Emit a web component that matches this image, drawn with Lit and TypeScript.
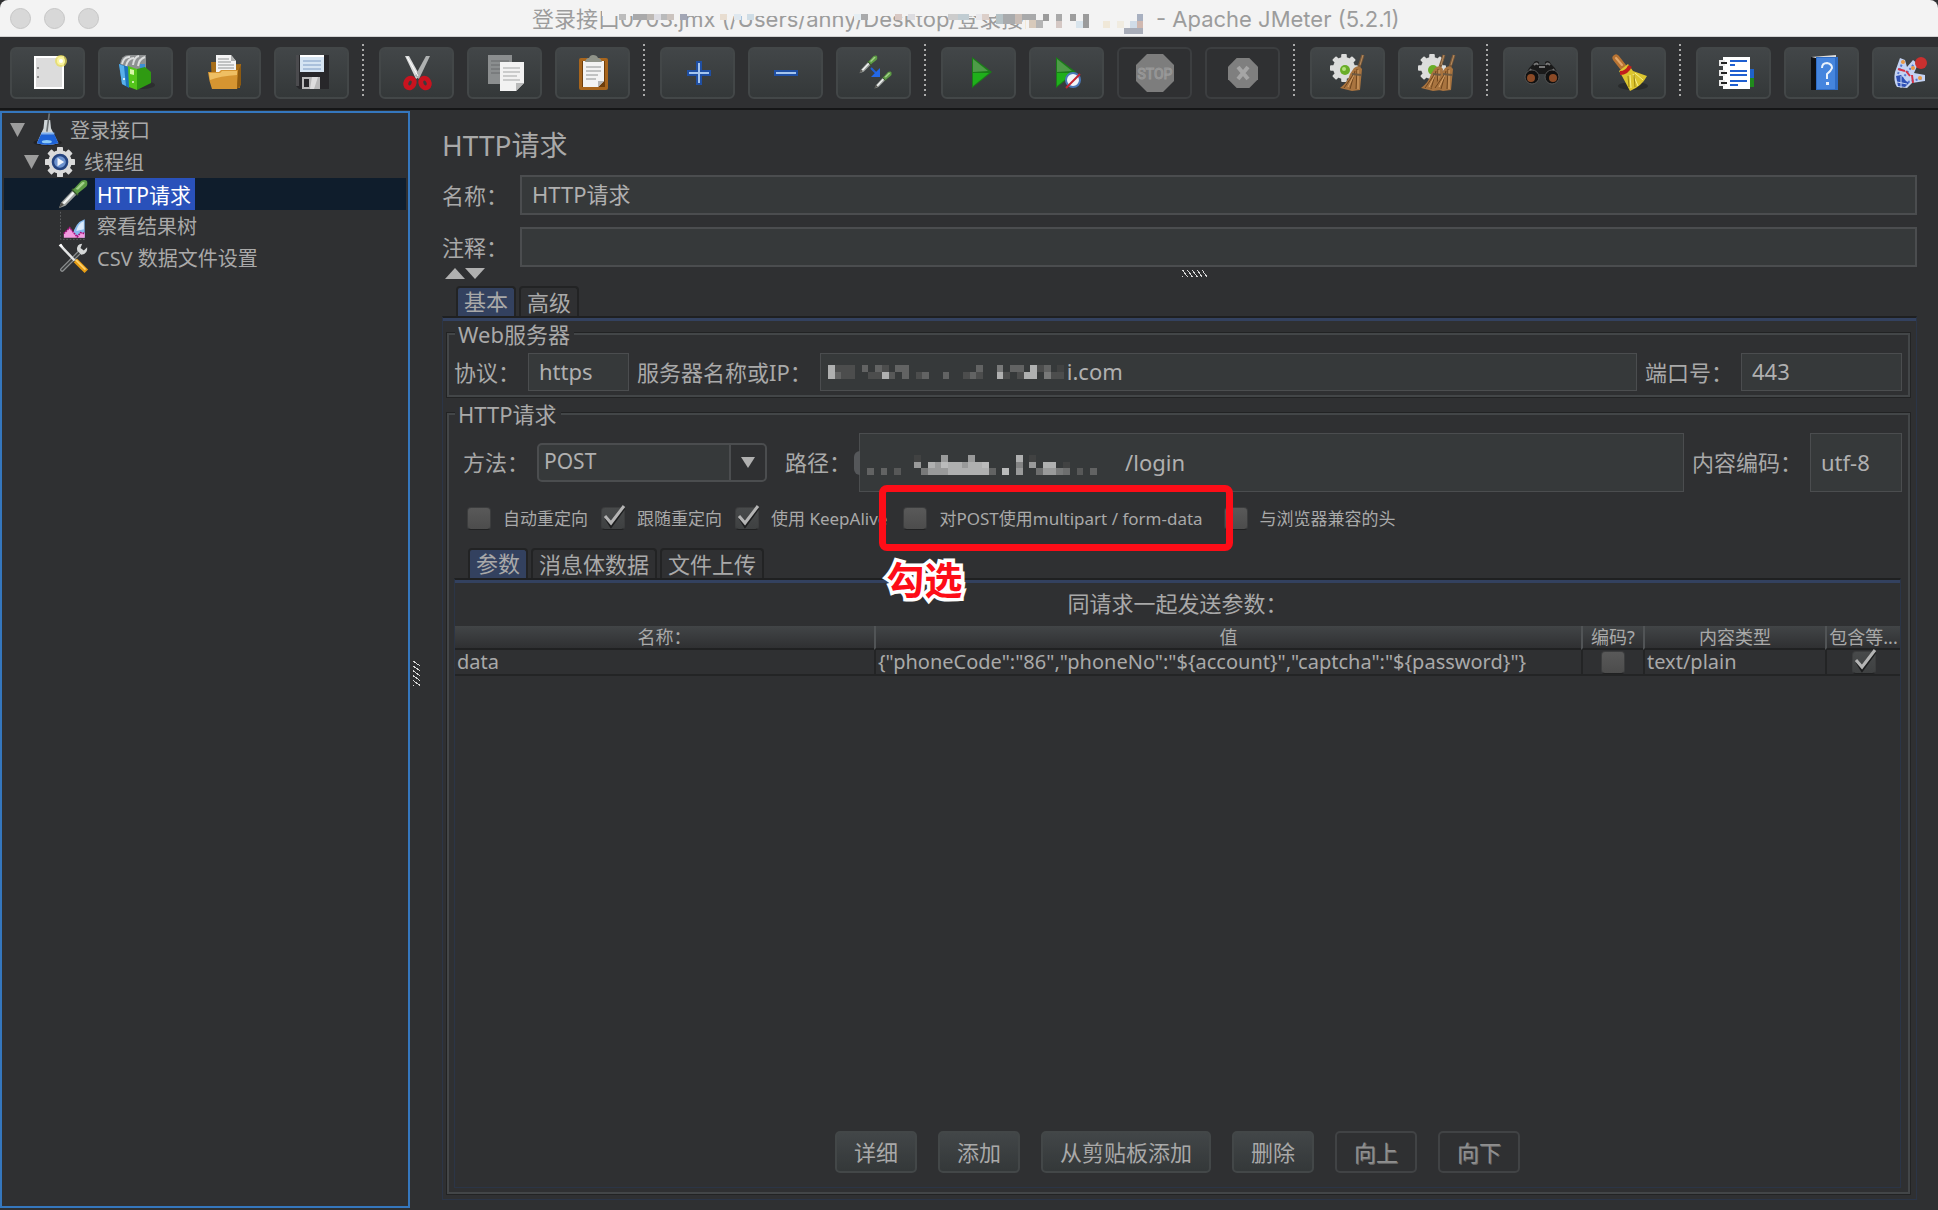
import { LitElement, html, svg, css, nothing } from "lit";
import type { TemplateResult, SVGTemplateResult } from "lit";
import { customElement, property } from "lit/decorators.js";
import { classMap } from "lit/directives/class-map.js";

/* ---------- icon drawings, 36 x 36 units ---------- */

const gear = (cx: number, cy: number, r: number, fill: string) => svg`
  <g transform="translate(${cx} ${cy})" fill=${fill}>
    <circle r=${r * 0.78}></circle>
    ${[0, 45, 90, 135].map(
      (a) => svg`<rect x=${-r * 0.2} y=${-r} width=${r * 0.4} height=${r * 2} rx="1" transform="rotate(${a})"></rect>`
    )}
  </g>`;

const pipette = svg`
  <path d="M1 35 L4 28 L17 14 L22 19 L9 32 Z" fill="#9a9f9c"></path>
  <path d="M5 29 L18 15 L20 17 L8 30 Z" fill="#f2f4f3"></path>
  <path d="M1 35 L4 28 L7 31 Z" fill="#54524d"></path>
  <path d="M17 12 L24 19" stroke="#3b5a2f" stroke-width="3"></path>
  <path d="M18 13 L28 2 Q34 0 35 3 Q36 8 33 10 L23 18 Z" fill="#5d9b45"></path>
  <path d="M21 12 L29 4 Q32 3 32 5 L24 13 Z" fill="#a4d18b"></path>`;

const broomHead = (x: number) => svg`
  <g transform="translate(${x} 0)">
    <path d="M33 0 L29 12" stroke="#7d5a38" stroke-width="3"></path>
    <path d="M33 0 L30 10" stroke="#b58d62" stroke-width="1"></path>
    <path d="M24 13 Q29 9 32 14 L30 35 L22 36 L10 33 Q18 27 20 19 Z" fill="#a9743f"></path>
    <path d="M27 14 L26 34 M25 16 L20 34 M23 20 L14 33" stroke="#6f451d" stroke-width="1"></path>
    <path d="M28 15 L28 34 M24 20 L18 32" stroke="#dba66b" stroke-width="1"></path>
    <path d="M22 19 L31 20" stroke="#6f5a42" stroke-width="2"></path>
  </g>`;

const octagon = (cx: number, cy: number, rx: number, ry: number) => {
  const k = 0.42;
  const pts = [[-k, -1], [k, -1], [1, -k], [1, k], [k, 1], [-k, 1], [-1, k], [-1, -k]];
  return pts.map(([x, y]) => `${cx + x * rx},${cy + y * ry}`).join(" ");
};

const ICONS: Record<string, SVGTemplateResult> = {
  new: svg`
    <rect x="4" y="1" width="30" height="33" fill="#fff"></rect>
    <rect x="6" y="3" width="26" height="29" fill="#dcdcdc"></rect>
    <circle cx="8" cy="13" r="1" fill="#777"></circle><circle cx="8" cy="22" r="1" fill="#777"></circle>
    <circle cx="31" cy="6" r="6" fill="#e9dd5a" opacity=".75"></circle>
    <circle cx="31" cy="6" r="4" fill="#fbf6a0"></circle><circle cx="31" cy="6" r="2" fill="#fff"></circle>`,
  templates: svg`
    <ellipse cx="24" cy="30" rx="13" ry="4" fill="#222" opacity=".5"></ellipse>
    <path d="M2 9 Q3 0 11 0 L28 0 L28 14 L8 14 Z" fill="#8d9091"></path>
    <path d="M4 9 Q6 1 12 2 M8 11 Q10 3 16 3 M15 10 Q16 2 21 1 M20 11 Q21 4 27 2" fill="none" stroke="#dcdede" stroke-width="2"></path>
    <path d="M1 9 L11 12 L11 33 L4 29 Z" fill="#1c74bd"></path>
    <path d="M1 9 L6 11 L8 31 L4 29 Z" fill="#58b0ea"></path>
    <rect x="22" y="9" width="5" height="5" fill="#3c8fd4"></rect>
    <path d="M10 11 L19 14 L19 35 L11 32 Z" fill="#54c41b"></path>
    <path d="M12 14 L16 15 L16 20 L12 19 Z" fill="#d7f7a8"></path>
    <path d="M19 14 L27 12 L33 17 L33 28 L19 35 Z" fill="#2f9a12"></path>
    <circle cx="15" cy="27" r="1" fill="#efffdc"></circle><circle cx="6" cy="24" r="1" fill="#fff"></circle>`,
  open: svg`
    <path d="M5 7 L14 7 L16 10 L35 9 L34 33 L6 33 Z" fill="#a76d17"></path>
    <path d="M10 0 L25 0 L30 6 L30 20 L10 20 Z" fill="#f4f4f4"></path>
    <path d="M25 0 L30 6 L25 6 Z" fill="#aeb0b0"></path>
    <path d="M12 4 H23 M12 7 H25 M12 10 H28 M12 13 H28" stroke="#8f9292"></path>
    <path d="M2 17 L13 17 L15 15 L32 15 L31 34 L6 34 Q3 26 2 17 Z" fill="#d69531"></path>
    <path d="M3 18 L14 18 L16 16 L31 16 L31 20 Q14 21 4 25 Z" fill="#efbf63"></path>
    <path d="M31 34 L35 30 L35 10 L32 16 Z" fill="#8e5a10"></path>`,
  save: svg`
    <path d="M2 0 H35 V34 H5 L2 31 Z" fill="#27272a"></path>
    <path d="M2 0 H5 V31 L2 31 Z" fill="#4b4b4e"></path>
    <rect x="6" y="0" width="24" height="17" fill="#d5e4f2"></rect>
    <rect x="6" y="0" width="24" height="2" fill="#fff"></rect>
    <path d="M9 6 H27 M9 10 H27 M9 14 H27" stroke="#7e9cc4" stroke-width="1"></path>
    <rect x="8" y="22" width="18" height="12" fill="#b9b9b9"></rect>
    <rect x="10" y="24" width="5" height="8" fill="#27272a"></rect>
    <path d="M18 22 H24 L20 34 H16 Z" fill="#dedede"></path>`,
  cut: svg`
    <path d="M6 1 L10 1 L21 21 L17 24 Z" fill="#d8dada"></path><path d="M31 1 L27 1 L16 21 L20 24 Z" fill="#aeb1b1"></path>
    <path d="M8 2 L19 21" stroke="#fff" stroke-width="1"></path>
    <ellipse cx="11" cy="28" rx="4" ry="5" transform="rotate(28 11 28)" fill="none" stroke="#c8131f" stroke-width="5"></ellipse>
    <ellipse cx="26" cy="28" rx="4" ry="5" transform="rotate(-28 26 28)" fill="none" stroke="#c8131f" stroke-width="5"></ellipse>`,
  copy: svg`
    <rect x="1" y="0" width="24" height="29" fill="#8b8e8f"></rect>
    <path d="M4 6 H22 M4 10 H22 M4 14 H14 M4 18 H14" stroke="#686b6c"></path>
    <path d="M13 7 H37 V28 L29 36 H13 Z" fill="#f2f2f2"></path>
    <path d="M16 13 H33 M16 17 H33 M16 21 H30 M16 25 H33" stroke="#a3a5a5"></path>
    <path d="M37 28 L29 36 L29 28 Z" fill="#b9baba"></path>`,
  paste: svg`
    <rect x="4" y="3" width="29" height="32" rx="2" fill="#a8651c"></rect>
    <rect x="7" y="6" width="23" height="26" fill="#6d3e0c"></rect>
    <path d="M8 6 H29 V26 L23 32 H8 Z" fill="#f3f3f3"></path>
    <path d="M11 12 H26 M11 16 H26 M11 20 H23 M11 24 H21" stroke="#8f9292"></path>
    <path d="M29 26 L23 32 L23 26 Z" fill="#b5b5b5"></path>
    <path d="M10 7 Q11 3 14 3 Q15 0 18 0 Q22 0 23 3 Q26 3 27 7 Z" fill="#8f9389"></path>`,
  plus: svg`
    <path d="M17 7 H21 V16 H30 V20 H21 V29 H17 V20 H8 V16 H17 Z" fill="#a5c5ee" stroke="#1f4fa3" stroke-width="2"></path>`,
  minus: svg`<rect x="7" y="16" width="22" height="4" fill="#a5c5ee" stroke="#1f4fa3" stroke-width="2"></rect>`,
  toggle: svg`
    <g transform="translate(3 0) scale(.52)">${pipette}</g><g transform="translate(18 16) scale(.5)">${pipette}</g>
    <path d="M15 13 L22 20" stroke="#2060d8" stroke-width="2"></path><path d="M24 13 V22 H15 Z" fill="#2368e8"></path>`,
  play: svg`
    <path d="M11 2 L31 17 L11 33 Z" fill="#1a7d18"></path><path d="M12 4 L27 16 L12 17 Z" fill="#4e9b48"></path>
    <path d="M12 18 L28 18 L12 31 Z" fill="#1fb01b"></path>`,
  playNow: svg`
    <path d="M7 2 L27 17 L7 33 Z" fill="#1a7d18"></path><path d="M8 4 L23 16 L8 17 Z" fill="#4e9b48"></path>
    <path d="M8 18 L24 18 L8 31 Z" fill="#1fb01b"></path>
    <circle cx="24" cy="25" r="7" fill="#f2f4f8" stroke="#4a78b8" stroke-width="2"></circle>
    <path d="M17 33 L31 19" stroke="#c22531" stroke-width="2"></path>`,
  stop: svg`
    <polygon points=${octagon(18, 18, 19, 19)} fill="#7d7d7d"></polygon>
    <text x="18" y="24" text-anchor="middle" font-family="Roboto, sans-serif" font-size="14" fill="none" stroke="#999" stroke-width="1">STOP</text>`,
  shutdown: svg`
    <polygon points=${octagon(18, 18, 15, 15)} fill="#7f7f7f"></polygon>
    <path d="M13 12 L23 24 M23 12 L13 24" stroke="#a5a5a5" stroke-width="4"></path>`,
  clear: svg`${gear(14, 13, 14, "#dcdddc")}<circle cx="15" cy="15" r="5" fill="#69ad28"></circle>
    <circle cx="14" cy="14" r="2" fill="#b5e07c"></circle>${broomHead(0)}`,
  clearAll: svg`${gear(14, 13, 14, "#dcdddc")}<circle cx="15" cy="15" r="5" fill="#69ad28"></circle>
    ${broomHead(-7)}${broomHead(3)}`,
  search: svg`
    <path d="M10 9 Q12 4 16 7 L16 22 L3 24 Q2 16 10 9 Z" fill="#1a1a1a"></path>
    <path d="M28 9 Q26 4 22 7 L22 22 L35 24 Q36 16 28 9 Z" fill="#1a1a1a"></path>
    <rect x="14" y="10" width="10" height="9" fill="#1a1a1a"></rect>
    <path d="M11 10 Q14 7 15 10 M27 10 Q24 7 23 10 M8 14 L6 18 M30 14 L32 18 M16 12 H22" stroke="#777" fill="none" stroke-width="2"></path>
    <circle cx="9" cy="22" r="7" fill="#111" stroke="#555"></circle><circle cx="29" cy="22" r="7" fill="#111" stroke="#555"></circle>
    <circle cx="8" cy="23" r="4" fill="#8b4a26"></circle><circle cx="30" cy="23" r="4" fill="#8b4a26"></circle>`,
  broom: svg`
    <ellipse cx="22" cy="31" rx="15" ry="4" fill="#1f2122" opacity=".6"></ellipse>
    <path d="M5 3 L12 12" stroke="#b87333" stroke-width="7" stroke-linecap="round"></path>
    <path d="M5 3 L11 10" stroke="#e3a86a" stroke-width="2" stroke-linecap="round"></path>
    <path d="M8 16 L17 9 L22 16 L36 21 Q31 31 19 36 L11 21 Z" fill="#dcc52f"></path>
    <path d="M19 20 L20 33 M22 19 L27 31 M24 18 L32 25" stroke="#f9f08c" stroke-width="1"></path>
    <path d="M17 21 L18 32 M23 20 L24 32" stroke="#9c8511" stroke-width="1"></path>
    <path d="M9 18 Q16 18 19 11" stroke="#c21d1d" stroke-width="4" fill="none"></path>`,
  functions: svg`
    <rect x="29" y="14" width="9" height="9" fill="#1f62c9"></rect><rect x="29" y="23" width="9" height="9" fill="#1f8a1c"></rect>
    <rect x="7" y="2" width="27" height="32" fill="#fff"></rect>
    <path d="M14 6 H31 M14 10 H19 M14 16 H31 M14 20 H31 M14 26 H31 M14 30 H22" stroke="#1f5fd0" stroke-width="2"></path>
    <path d="M3 8 H9 M3 18 H9 M3 28 H9" stroke="#e8e8e8" stroke-width="6"></path>
    <path d="M5 8 H11 M5 18 H11 M5 28 H11" stroke="#222" stroke-width="2"></path>`,
  help: svg`
    <path d="M7 2 L32 0 L32 3 L11 4 Z" fill="#dcdcdc"></path>
    <path d="M7 2 L12 3 L12 35 L7 35 Z" fill="#101114"></path><rect x="12" y="2" width="22" height="33" fill="#2f6cc4"></rect>
    <rect x="13" y="3" width="18" height="31" fill="#4585de"></rect>
    <path d="M18 13 Q18 8 23 8 Q28 9 28 13 Q27 16 23 19 L23 24" fill="none" stroke="#e9f1fb" stroke-width="2"></path>
    <rect x="22" y="27" width="3" height="3" fill="#e9f1fb"></rect>`,
  jmeter: svg`
    <path d="M3 17 L8 3 L13 5 L15 12 L21 5 L26 9 L22 18 L33 20 L33 26 L20 28 L15 33 L5 32 Q1 26 3 17 Z" fill="#c3d2f2"></path>
    <path d="M6 19 L11 6 M10 24 L22 9 M12 28 L31 23" stroke="#5677cf" stroke-width="2" stroke-dasharray="2 2"></path>
    <path d="M4 21 L9 20 L14 26 L17 28 L13 32 L6 31 Z" fill="#2d4fb5"></path>
    <path d="M5 27 L15 29 M9 21 L9 33" stroke="#c3d2f2" stroke-width="1"></path>
    <path d="M6 14 L13 16 M14 16 L18 21 M20 20 L21 28" stroke="#d63344" stroke-width="2" fill="none"></path>
    <circle cx="11" cy="7" r="2" fill="#ea9a46"></circle><circle cx="21" cy="13" r="2" fill="#ea9a46"></circle><circle cx="28" cy="23" r="2" fill="#ea9a46"></circle>
    <circle cx="29" cy="8" r="6" fill="#c9302f"></circle>`,
  flask: svg`
    <ellipse cx="20" cy="33" rx="17" ry="4" fill="#1c1d1e" opacity=".7"></ellipse>
    <path d="M16 6 L23 6 L24 16 L33 34 Q20 38 7 34 L15 16 Z" fill="#cfd5d8"></path>
    <path d="M22 -2 L19 20" stroke="#6d7275" stroke-width="2"></path>
    <path d="M12 23 L28 23 L33 34 Q20 38 7 34 Z" fill="#1d62d6"></path>
    <ellipse cx="19" cy="32" rx="6" ry="2" fill="#8ccaf8"></ellipse>
    <path d="M12 22 L28 22" stroke="#7fb2f3" stroke-width="2"></path>`,
  group: svg`${gear(18, 18, 18, "#dadada")}
    <circle cx="18" cy="18" r="10" fill="#24437f"></circle><circle cx="18" cy="18" r="7" fill="#6d93cf"></circle>
    <path d="M15 13 L23 18 L15 23 Z" fill="#f0f4fb"></path>`,
  pipette,
  results: svg`
    <path d="M3 1 V34 H34" stroke="#66686a" stroke-dasharray="2 2" fill="none"></path>
    <path d="M17 31 Q20 14 32 10 L32 32 Z" fill="#86b9ee"></path><path d="M22 24 Q24 15 31 12 L31 22 Z" fill="#dceafb"></path>
    <path d="M7 32 L7 27 L14 20 L18 25 L23 31 L27 26 L32 26 L32 32 Z" fill="#f39be0"></path>
    <path d="M7 27 L14 20 L18 25 L23 31 L27 26 L32 27" stroke="#a8127d" stroke-width="2" stroke-dasharray="2 1" fill="none"></path>`,
  tools: svg`
    <path d="M5 32 L27 10" stroke="#8c8f90" stroke-width="5" stroke-linecap="round"></path>
    <path d="M5 32 L27 10" stroke="#3b3d3e" stroke-width="2" stroke-linecap="round"></path>
    <path d="M23 9 Q22 1 29 1 L27 6 L31 9 L35 5 Q36 13 28 14 Z" fill="#d5d7d7"></path>
    <path d="M2 2 L20 21" stroke="#e3e4e4" stroke-width="3"></path><path d="M1 3 L4 1 L7 6" fill="#fff"></path>
    <path d="M21 21 L34 34" stroke="#e79d14" stroke-width="6"></path><path d="M21 20 L33 32" stroke="#ffd36b" stroke-width="2"></path>`,
};

const icon = (name: string) =>
  html`<svg class="icon" viewBox="0 0 36 36" aria-hidden="true">${ICONS[name]}</svg>`;

/* Redacted text: every character is the grey level of one block, a dot is an empty block. */
const mosaic = (rows: string[], width: number, height: number) => html`
  <svg class="mosaic" width=${width} height=${height} viewBox="0 0 ${rows[0].length} ${rows.length}"
    preserveAspectRatio="none" shape-rendering="crispEdges" aria-hidden="true">
    ${rows.map((row, y) =>
      [...row].map((c, x) => {
        if (c === ".") return nothing;
        const v = 54 + parseInt(c, 16) * 11;
        return svg`<rect x=${x} y=${y} width="1" height="1" fill="rgb(${v},${v + 1},${v + 1})"></rect>`;
      })
    )}
  </svg>`;

const HOST_MOSAIC = ["b222.4.42.44..........4..6.44.b24.1", "b422..22b3.4.24..4..242..b2.2bb.622"];
const PATH_MOSAIC = [
  ".......1...9...9......b.1.........",
  ".......9.b9cbb9bbc....7.9.bb.1....",
  "4.4.3...6999bbbbbb4.c.9..59965.3.4",
];

/* x, y, width, height, colour */
const TITLE_BLOCKS: [number, number, number, number, string][] = [
  [29, 0, 7, 6, "#bcbcbc"], [43, 0, 14, 6, "#a9a9aa"], [57, 0, 7, 6, "#bdb8b4"], [64, 0, 7, 6, "#dcdce2"],
  [71, 0, 6, 6, "#b9babb"], [77, 0, 7, 6, "#cbc3be"], [90, 0, 7, 6, "#a2a6b5"], [130, 0, 7, 6, "#e8ddd0"],
  [144, 0, 7, 6, "#dfe8ef"], [157, 0, 7, 6, "#cfdde6"], [264, 0, 7, 6, "#e5eef3"], [271, 0, 7, 6, "#a9aaab"],
  [305, 0, 7, 6, "#d9c9c4"], [318, 0, 7, 6, "#dcdce0"], [358, 0, 10, 6, "#cccccc"], [368, 0, 11, 6, "#c0ccd2"],
  [386, 0, 6, 6, "#e8e8ec"], [392, 0, 7, 6, "#dccfc9"], [406, 0, 7, 10, "#b5c2c6"], [413, 0, 12, 10, "#a8aaac"],
  [425, 0, 7, 10, "#c8bcb5"], [432, 0, 14, 6, "#a8a9aa"], [439, 6, 7, 8, "#d8cabb"], [446, 6, 7, 8, "#b5b5b5"],
  [453, 0, 6, 7, "#9b9b9b"], [466, 0, 6, 7, "#a9a9a9"], [466, 7, 6, 7, "#d5c8c4"], [480, 0, 6, 7, "#9d9d9d"],
  [486, 7, 7, 7, "#d8e4ec"], [493, 0, 6, 14, "#9b9b9b"], [513, 7, 7, 7, "#f0e8d8"], [527, 7, 7, 7, "#f0ebe0"],
  [534, 14, 19, 6, "#a9adb8"], [540, 7, 7, 7, "#d0dce8"], [547, 0, 6, 7, "#a8b0c0"], [547, 7, 6, 7, "#d0b8b0"],
];

const TOOLBAR: { icon: string; label: string; off?: boolean }[][] = [
  [
    { icon: "new", label: "新建" }, { icon: "templates", label: "模板" },
    { icon: "open", label: "打开" }, { icon: "save", label: "保存" },
  ],
  [{ icon: "cut", label: "剪切" }, { icon: "copy", label: "复制" }, { icon: "paste", label: "粘贴" }],
  [{ icon: "plus", label: "展开全部" }, { icon: "minus", label: "折叠全部" }, { icon: "toggle", label: "切换" }],
  [
    { icon: "play", label: "启动" }, { icon: "playNow", label: "不停顿开始" },
    { icon: "stop", label: "停止", off: true }, { icon: "shutdown", label: "关闭", off: true },
  ],
  [{ icon: "clear", label: "清除" }, { icon: "clearAll", label: "清除全部" }],
  [{ icon: "search", label: "查找" }, { icon: "broom", label: "重置搜索" }],
  [{ icon: "functions", label: "函数助手" }, { icon: "help", label: "帮助" }, { icon: "jmeter", label: "JMeter" }],
];

const base = css`
  * { box-sizing: border-box; }
  button, input, select { font: inherit; color: inherit; margin: 0; }
  .icon { width: 36px; height: 36px; overflow: visible; flex: none; display: block; }
`;

@customElement("title-bar")
class TitleBar extends LitElement {
  static styles = [base, css`
    :host { display: flex; align-items: center; height: 37px; padding-left: 10px; background: #f3f3f3;
      border-bottom: 1px solid #d2d2d2; border-radius: 8px 8px 0 0; position: relative;
      font-family: Inter, "Noto Sans CJK SC", sans-serif; font-size: 22px; color: #9c9c9c; }
    .light { width: 21px; height: 21px; border-radius: 50%; border: 1px solid #c6c6c6; background: #d8d8d8;
      padding: 0; margin-right: 13px; }
    .title { position: absolute; left: 532px; top: 3px; display: flex; white-space: nowrap; line-height: 32px; }
    .file { width: 624px; overflow: hidden; }
    .mask { position: absolute; left: 58px; top: 1px; }
  `];
  render() {
    return html`
      ${["关闭", "最小化", "缩放"].map((l) => html`<button class="light" aria-label=${l}></button>`)}
      <div class="title">
        <span class="file">登录接口0703.jmx (/Users/anny/Desktop/登录接口</span>
        <span>- Apache JMeter (5.2.1)</span>
        <svg class="mask" width="556" height="30" aria-hidden="true" shape-rendering="crispEdges">
          <rect x="12" y="0" width="541" height="12" fill="#f3f3f3"></rect>
          <rect x="436" y="0" width="117" height="30" fill="#f3f3f3"></rect>
          <g transform="translate(0 10)">
            ${TITLE_BLOCKS.map(([x, y, w, h, f]) => svg`<rect x=${x} y=${y} width=${w} height=${h} fill=${f}></rect>`)}
          </g>
        </svg>
      </div>`;
  }
}

@customElement("tool-bar")
class ToolBar extends LitElement {
  static styles = [base, css`
    :host { display: flex; gap: 13px; height: 73px; padding: 10px 0 0 10px; overflow: hidden;
      border-bottom: 2px solid #151617; }
    .btn { flex: none; width: 75px; height: 52px; padding: 0; border: 2px solid #434748; border-radius: 6px;
      background: linear-gradient(#424648, #343839); display: flex; align-items: center; justify-content: center; }
    .btn:disabled { background: none; border-color: #3c3e40; }
    .sep { flex: none; width: 4px; height: 53px; margin-top: -3px;
      background: repeating-linear-gradient(#a9a9a9 0 2px, transparent 2px 5px) left / 2px 100% no-repeat; }
  `];
  render() {
    return TOOLBAR.map((group, i) => html`
      ${i ? html`<span class="sep"></span>` : nothing}
      ${group.map((b) => html`
        <button class="btn" aria-label=${b.label} ?disabled=${b.off ?? false}>${icon(b.icon)}</button>`)}
    `);
  }
}

@customElement("test-tree")
class TestTree extends LitElement {
  static styles = [base, css`
    :host { display: block; border: 2px solid #3577be; padding: 1px 2px; font-size: 20px; }
    .row { display: flex; align-items: center; height: 32px; gap: 8px; white-space: nowrap; }
    .l0 { padding-left: 6px; } .l1 { padding-left: 20px; } .l2 { padding-left: 54px; }
    .twist { width: 15px; height: 14px; flex: none; margin-right: -2px; background: #9c9c9c;
      clip-path: polygon(0 0, 100% 0, 50% 100%); }
    .icon { width: 30px; height: 30px; }
    .name { line-height: 30px; padding: 2px 4px 0 2px; margin-left: -1px; }
    .selected { background: #0f1d2c; }
    .selected .name { background: #2951ba; color: #fff; font-size: 21px; }
  `];
  render() {
    const rows = [
      { level: 0, icon: "flask", name: "登录接口", open: true },
      { level: 1, icon: "group", name: "线程组", open: true },
      { level: 2, icon: "pipette", name: "HTTP请求", selected: true },
      { level: 2, icon: "results", name: "察看结果树" },
      { level: 2, icon: "tools", name: "CSV 数据文件设置" },
    ];
    return html`<div role="tree">${rows.map((r) => html`
      <div role="treeitem" aria-selected=${r.selected ? "true" : "false"}
        class=${classMap({ row: true, [`l${r.level}`]: true, selected: !!r.selected })}>
        ${r.open ? html`<span class="twist"></span>` : nothing}${icon(r.icon)}<span class="name">${r.name}</span>
      </div>`)}</div>`;
  }
}

@customElement("check-box")
class CheckBox extends LitElement {
  @property() label = "";
  @property({ type: Boolean }) checked = false;
  @property({ type: Boolean }) bare = false;
  static styles = [base, css`
    :host { display: inline-flex; flex: none; font-size: 17px; }
    label { display: flex; align-items: center; gap: 12px; white-space: nowrap; line-height: 23px; }
    .box { position: relative; display: block; width: 24px; height: 23px; }
    input { appearance: none; display: block; width: 24px; height: 23px; border: 1px solid #3c3d3e; border-radius: 4px;
      border-bottom-color: #202122; background: linear-gradient(#595959, #4c4c4c); }
    input:checked { background: linear-gradient(#484a4b, #3e4041); }
    .tick { position: absolute; left: 2px; top: -3px; pointer-events: none; }
  `];
  render() {
    const box = html`<span class="box">
      <input type="checkbox" aria-label=${this.label} .checked=${this.checked}>
      ${this.checked ? html`<svg class="tick" width="24" height="26" viewBox="0 0 24 26" aria-hidden="true">
        <path d="M3 14 L8 22 L21 4" fill="none" stroke="#1c1d1e" stroke-width="3"></path>
        <path d="M2 12 L8 19 L21 2" fill="none" stroke="#b4b4b4" stroke-width="3"></path></svg>` : nothing}
    </span>`;
    return this.bare ? box : html`<label>${box}<span>${this.label}</span></label>`;
  }
}

@customElement("request-editor")
class RequestEditor extends LitElement {
  static styles = [base, css`
    :host { display: flex; flex-direction: column; min-width: 0; padding: 16px 21px 8px 19px; font-size: 22px; }
    h1 { margin: 0 0 12px; font-size: 28px; font-weight: 400; line-height: 36px; }
    label { white-space: nowrap; flex: none; padding-bottom: 3px; }
    .meta { display: grid; grid-template-columns: auto 1fr; gap: 12px; align-items: center; }
    .field { position: relative; display: flex; align-items: center; min-width: 0; background: #36393a;
      border: 2px solid #4b4d4f; height: 40px; padding: 0 10px; color: #b0b0b0; }
    .field input { flex: 1; width: 100%; min-width: 0; padding: 0 0 2px; border: 0; outline: 0; background: none; line-height: 30px; }
    .thin { border-width: 1px; height: 38px; }
    .tall { border-width: 1px; height: 59px; }
    .mosaic { flex: none; }
    .host .mosaic { margin: 0 3px 0 -3px; }
    .path .mosaic { margin: 4px 28px 0 -3px; }
    .path::before { content: ""; position: absolute; left: -6px; top: 17px; width: 6px; height: 24px;
      border-radius: 6px 0 0 6px; background: #55575a; }
    .folds { display: flex; align-items: flex-start; height: 19px; padding: 1px 0 0 3px; }
    .up, .down { width: 20px; height: 11px; padding: 0; border: 0; background: #b0b0b0; }
    .up { clip-path: polygon(50% 0, 100% 100%, 0 100%); }
    .down { clip-path: polygon(0 0, 100% 0, 50% 100%); }
    .grip { margin: 2px auto 0; width: 25px; height: 7px;
      background: repeating-linear-gradient(55deg, #d8d8d8 0 1px, #2f3032 1px 4px); }
    .after { width: 14px; }

    .tabs { display: flex; gap: 3px; padding-left: 14px; height: 30px; }
    .tab { height: 30px; padding: 0 6px; border: 2px solid #222324; border-bottom: 0; border-radius: 4px 4px 0 0;
      background: #2f3032; line-height: 26px; white-space: nowrap; }
    .on { background: #33415f; padding-bottom: 5px; margin-bottom: -2px; height: 32px; }
    .pane { display: flex; flex-direction: column; flex: 1; min-width: 0; border: 1px solid #2b3547;
      border-top: 2px solid #1f2021; }
    .pane::before { content: ""; display: block; height: 3px; background: #33415f; flex: none; }
    .body { display: flex; flex-direction: column; flex: 1; min-width: 0; gap: 5px; padding: 1px 6px 5px 4px; }
    fieldset { min-width: 0; margin: 0; border: 2px solid #434648; box-shadow: 0 0 0 1px #222324;
      padding: 7px 6px 4px 5px; }
    legend { margin-left: 1px; padding: 0 4px 0 3px; line-height: 24px; background: #2f3032; }
    .grow { flex: 1; display: flex; flex-direction: column; }
    .line { display: flex; align-items: center; gap: 8px; }
    .wide { flex: 1; }
    .w100 { width: 101px; } .w160 { width: 161px; } .w90 { width: 92px; }
    .method { padding-left: 9px; } .pathLabel { padding-left: 10px; }
    .select { position: relative; width: 230px; height: 39px; flex: none; font-size: 21px; color: #b0b0b0; }
    .select select { appearance: none; width: 100%; height: 100%; padding: 0 0 4px 5px; background: #36393a;
      border: 2px solid #4b4d4f; border-radius: 5px; }
    .arrow { position: absolute; right: 2px; top: 2px; bottom: 2px; width: 36px; background: #2f3032;
      border-left: 2px solid #4b4d4f; border-radius: 0 4px 4px 0; display: flex; align-items: center; justify-content: center;
      pointer-events: none; }
    .arrow i { width: 14px; height: 11px; background: #b0b0b0; clip-path: polygon(0 0, 100% 0, 50% 100%); }
    .checks { position: relative; display: flex; gap: 13px; padding: 15px 0 18px 13px; }
    .marked { position: relative; display: flex; margin: 0 8px 0 3px; }
    .frame { position: absolute; left: -24px; right: -30px; top: -22px; bottom: -21px; border: 7px solid #fd0d17;
      border-radius: 8px; pointer-events: none; z-index: 1; }
    .note { position: absolute; left: -17px; top: 49px; font-size: 38px; line-height: 46px; font-weight: 700; color: #fd0d17;
      -webkit-text-stroke: 7px #fff; paint-order: stroke fill; white-space: nowrap; pointer-events: none; z-index: 1; }
    .inner { padding: 0 1px 0 0; display: flex; flex-direction: column; flex: 1; }
    .caption { margin: 0; text-align: center; line-height: 40px; padding-bottom: 3px; }

    table { width: 100%; border-collapse: separate; border-spacing: 0; table-layout: fixed; font-size: 20px; }
    th { font-weight: 400; font-size: 18px; line-height: 22px; padding: 0; white-space: nowrap;
      background: linear-gradient(#424547, #2f3032); border-bottom: 2px solid #202122;
      border-left: 2px solid #515456; }
    td { height: 26px; line-height: 24px; padding: 0 2px; border-bottom: 2px solid #232425; border-left: 2px solid #232425;
      white-space: nowrap; }
    th:first-child, td:first-child { border-left: 0; }
    .mid { text-align: center; line-height: 0; }
    .c1 { width: 419px; } .c3 { width: 62px; } .c4 { width: 182px; } .c5 { width: 75px; }
    .actions { display: flex; justify-content: center; gap: 21px; margin-top: auto; padding-bottom: 14px; }
    .act { height: 42px; padding: 0 17px; border: 2px solid #434748; border-radius: 5px;
      background: linear-gradient(#424648, #343839); white-space: nowrap; line-height: 36px; }
    .act:disabled { background: none; border-color: #414345; color: #8f8f8f; text-shadow: 1px 1px #6d6d6d; }
  `];

  private field(id: string, label: string, value: string, cls: string, labelCls = "", lead: TemplateResult | typeof nothing = nothing) {
    return html`<label for=${id} class=${labelCls}>${label}</label>
      <span class="field ${cls}">${lead}<input id=${id} type="text" .value=${value}></span>`;
  }

  render() {
    return html`
      <h1>HTTP请求</h1>
      <div class="meta">
        ${this.field("name", "名称：", "HTTP请求", "")}
        ${this.field("comment", "注释：", "", "")}
      </div>
      <div class="folds">
        <button class="up" aria-label="收起"></button><button class="down" aria-label="展开"></button>
        <span class="grip"></span><span class="after"></span>
      </div>
      <div class="tabs" role="tablist">
        <button class="tab on" role="tab" aria-selected="true">基本</button>
        <button class="tab" role="tab" aria-selected="false">高级</button>
      </div>
      <section class="pane"><div class="body">
        <fieldset>
          <legend>Web服务器</legend>
          <div class="line">
            ${this.field("protocol", "协议：", "https", "thin w100")}
            ${this.field("host", "服务器名称或IP：", "i.com", "thin wide host", "", mosaic(HOST_MOSAIC, 236, 14))}
            ${this.field("port", "端口号：", "443", "thin w160")}
          </div>
        </fieldset>
        <fieldset class="grow">
          <legend>HTTP请求</legend>
          <div class="line">
            <label for="method" class="method">方法：</label>
            <span class="select">
              <select id="method"><option>POST</option><option>GET</option></select>
              <span class="arrow"><i></i></span>
            </span>
            ${this.field("path", "路径：", "/login", "tall wide path", "pathLabel", mosaic(PATH_MOSAIC, 230, 20))}
            ${this.field("encoding", "内容编码：", "utf-8", "tall w90")}
          </div>
          <div class="checks">
            <check-box label="自动重定向"></check-box>
            <check-box label="跟随重定向" checked></check-box>
            <check-box label="使用 KeepAlive" checked></check-box>
            <span class="marked">
              <check-box label="对POST使用multipart / form-data"></check-box>
              <span class="frame"></span><span class="note">勾选</span>
            </span>
            <check-box label="与浏览器兼容的头"></check-box>
          </div>
          <div class="inner">
            <div class="tabs" role="tablist">
              <button class="tab on" role="tab" aria-selected="true">参数</button>
              <button class="tab" role="tab" aria-selected="false">消息体数据</button>
              <button class="tab" role="tab" aria-selected="false">文件上传</button>
            </div>
            <div class="pane">
              <p class="caption">同请求一起发送参数：</p>
              <table>
                <thead><tr>
                  <th class="c1">名称：</th><th>值</th><th class="c3">编码?</th>
                  <th class="c4">内容类型</th><th class="c5">包含等...</th>
                </tr></thead>
                <tbody><tr>
                  <td>data</td>
                  <td>{"phoneCode":"86","phoneNo":"\${account}","captcha":"\${password}"}</td>
                  <td class="mid"><check-box bare label="编码?"></check-box></td>
                  <td>text/plain</td>
                  <td class="mid"><check-box bare checked label="包含等于？"></check-box></td>
                </tr></tbody>
              </table>
              <div class="actions">
                ${["详细", "添加", "从剪贴板添加", "删除"].map((t) => html`<button class="act">${t}</button>`)}
                ${["向上", "向下"].map((t) => html`<button class="act" disabled>${t}</button>`)}
              </div>
            </div>
          </div>
        </fieldset>
      </div></section>`;
  }
}

@customElement("app-root")
class AppRoot extends LitElement {
  static styles = [base, css`
    :host { display: flex; flex-direction: column; min-height: 100vh; overflow: hidden; background: #2f3032; color: #a9a9a9;
      font-family: "Noto Sans", "Noto Sans CJK SC", sans-serif; font-size: 20px; }
    .work { flex: 1; display: grid; grid-template-columns: 410px 13px minmax(0, 1fr); padding: 1px 0 2px; }
    .split { display: flex; align-items: center; justify-content: center; }
    .grip { width: 7px; height: 25px; margin-top: 28px;
      background: repeating-linear-gradient(35deg, #d8d8d8 0 1px, #2f3032 1px 4px); }
  `];
  render() {
    return html`
      <title-bar></title-bar>
      <tool-bar></tool-bar>
      <div class="work">
        <test-tree></test-tree>
        <div class="split"><span class="grip"></span></div>
        <request-editor></request-editor>
      </div>`;
  }
}
